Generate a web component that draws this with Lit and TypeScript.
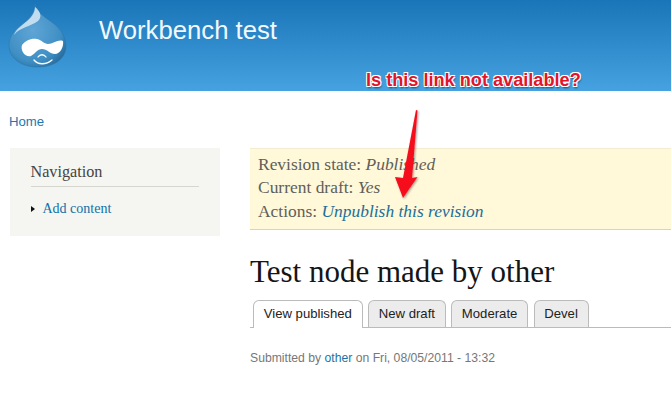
import { LitElement, html, css } from "lit";
import { customElement } from "lit/decorators.js";

@customElement("app-root")
export class AppRoot extends LitElement {
  static styles = css`
    :host { display: block; position: relative; width: 671px; height: 408px; overflow: hidden; background: #fff; font-family: "Liberation Sans", Arial, sans-serif; }
    a { color: #0f71a8; text-decoration: none; }
    .header { height: 91px; background: linear-gradient(#1a75b8, #46a2e0); display: flex; align-items: flex-start; gap: 31px; padding-left: 8px; box-sizing: border-box; }
    .logo { width: 60px; height: 68px; margin-top: 3px; flex: none; }
    .site { color: #f2f9fd; font-size: 25.7px; line-height: 28px; margin-top: 16px; }
    .crumb { font-size: 13.2px; line-height: 16px; padding: 23px 0 0 9px; height: 34px; box-sizing: content-box; }
    .crumb a { color: #1d78b0; }
    .cols { display: flex; align-items: flex-start; padding-left: 10px; gap: 30px; }
    .side { width: 210px; height: 88px; box-sizing: border-box; background: #f5f5f1; padding: 15px 21px 0 20.5px; font-family: "Liberation Serif", serif; flex: none; }
    .side h2 { margin: 0; font-weight: normal; font-size: 16.2px; line-height: 19px; color: #444; padding-bottom: 4px; border-bottom: 1px solid #d6d6d0; }
    .side .item { display: flex; align-items: center; gap: 8px; margin-top: 14px; font-size: 14px; line-height: 16px; }
    .bullet { width: 0; height: 0; border-left: 4px solid #111; border-top: 3px solid transparent; border-bottom: 3px solid transparent; }
    .main { flex: 1; min-width: 0; font-family: "Liberation Serif", serif; }
    .notice { height: 82px; box-sizing: border-box; background: #fff8d9; border-top: 1px solid #f2ecd0; border-bottom: 1px solid #d6d3c4; padding: 3.5px 0 0 8px; font-size: 17.45px; line-height: 23.5px; color: #5f5f5a; }
    .notice a { color: #1a6f9c; }
    h1 { margin: 24px 0 0; font-weight: normal; font-size: 31px; line-height: 36px; color: #151515; }
    .tabs { display: flex; gap: 5.5px; padding-left: 3px; margin-top: 10px; border-bottom: 1px solid #bbb; height: 27px; box-sizing: content-box; font-family: "Liberation Sans", sans-serif; font-size: 13.15px; }
    .tab { height: 27px; line-height: 26px; box-sizing: border-box; padding: 0 9.7px; background: #ececec; border: 1px solid #bbb; border-bottom: none; border-radius: 6px 6px 0 0; color: #222; }
    .tab.on { background: #fff; height: 28px; margin-bottom: -1px; }
    .meta { font-family: "Liberation Sans", sans-serif; font-size: 12.2px; line-height: 14px; color: #777; margin-top: 23px; }
    .meta a { color: #1a73a8; }
    .note { position: absolute; left: 366px; top: 70px; font-size: 18.15px; line-height: 20px; font-weight: bold; color: #e0152c; white-space: nowrap; text-shadow: -1px -1px 0 #fff, 1px -1px 0 #fff, -1px 1px 0 #fff, 1px 1px 0 #fff, 0 -1px 0 #fff, 0 1px 0 #fff, 1px 2px 2px rgba(0,0,0,.55); }
    .arrow { position: absolute; left: 390px; top: 106px; width: 36px; height: 94px; }
  `;
  render() {
    return html`
      <div class="header">
        <svg class="logo" viewBox="0 0 60 68">
          <defs>
            <radialGradient id="d" cx=".42" cy=".42" r=".68"><stop offset="0" stop-color="#5fa5d6"/><stop offset=".72" stop-color="#3f8fc4"/><stop offset="1" stop-color="#26699a"/></radialGradient>
          </defs>
          <path d="M27 1C28 9 37 14 45 20C53 26 58 34 58 43C58 56 46 64 30 64C14 64 1 56 1 42C1 31 10 24 17 19C22 15 27 9 27 1Z" fill="url(#d)" stroke="#2c79ad" stroke-width=".6"/>
          <path d="M27 4C27 13 19 18 12 24C9 26 7 29 6 32C12 24 22 24 30 18C34 14 33 9 27 4Z" fill="#d5e8f4" opacity=".85"/>
          <path d="M14 42C17 38 23 35 29 36C34 37 36 41 40 41C45 41 50 36 55 38C56 44 52 51 47 51C42 51 39 46 34 46C29 46 28 50 23 53C18 55 12 48 14 42Z" fill="#fff"/>
          <path d="M26 57C30 62 38 62 44 57M30 54C32 51 36 51 38 54" fill="none" stroke="#fff" stroke-width="1.300" stroke-linecap="round"/>
        </svg>
        <div class="site">Workbench test</div>
      </div>
      <div class="crumb"><a href="#">Home</a></div>
      <div class="cols">
        <div class="side">
          <h2>Navigation</h2>
          <div class="item"><span class="bullet"></span><a href="#">Add content</a></div>
        </div>
        <div class="main">
          <div class="notice">
            <div>Revision state: <em>Published</em></div>
            <div>Current draft: <em>Yes</em></div>
            <div>Actions: <em><a href="#">Unpublish this revision</a></em></div>
          </div>
          <h1>Test node made by other</h1>
          <div class="tabs">
            <div class="tab on">View published</div>
            <div class="tab">New draft</div>
            <div class="tab">Moderate</div>
            <div class="tab">Devel</div>
          </div>
          <div class="meta">Submitted by <a href="#">other</a> on Fri, 08/05/2011 - 13:32</div>
        </div>
      </div>
      <div class="note">Is this link not available?</div>
      <svg class="arrow" viewBox="0 0 36 94">
        <defs><filter id="s" x="-30%" y="-10%" width="160%" height="120%"><feDropShadow dx="1" dy="1" stdDeviation="1.200" flood-color="#000" flood-opacity=".4"/></filter></defs>
        <path d="M26 4L27.500 4.500L22 72L27.500 71L13 92L5 71L13 72Z" fill="#f50d1e" filter="url(#s)"/>
      </svg>
    `;
  }
}
